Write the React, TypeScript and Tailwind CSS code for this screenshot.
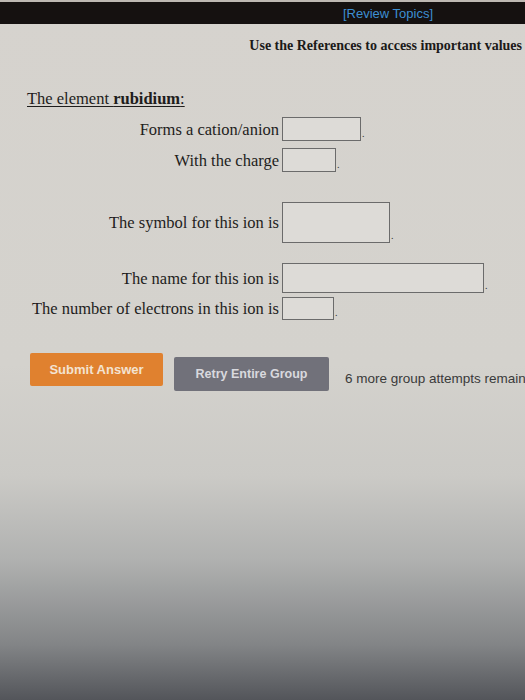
const serif = "font-['Liberation_Serif','Times_New_Roman',serif]"
const sans = "font-['Liberation_Sans',Arial,sans-serif]"

interface Blank {
  label: string
  w: string
  h: string
  mt: string
}

const blanks: Blank[] = [
  { label: 'Forms a cation/anion', w: 'w-[79px]', h: 'h-[24px]', mt: 'mt-[9px]' },
  { label: 'With the charge', w: 'w-[54px]', h: 'h-[24px]', mt: 'mt-[7px]' },
  { label: 'The symbol for this ion is', w: 'w-[108px]', h: 'h-[41px]', mt: 'mt-[30px]' },
  { label: 'The name for this ion is', w: 'w-[202px]', h: 'h-[30px]', mt: 'mt-[20px]' },
  { label: 'The number of electrons in this ion is', w: 'w-[52px]', h: 'h-[23px]', mt: 'mt-[4px]' },
]

function BlankRow({ b }: { b: Blank }) {
  return (
    <div className={`flex items-center ${b.mt}`}>
      <div className="w-[282px] shrink-0 pr-[3px] text-right text-[16.5px] leading-[19px] text-[#1e1d1c]">{b.label}</div>
      <div className={`${b.w} ${b.h} shrink-0 border border-[#6b6b6b] bg-[#dddbd7]`} />
      <span className="ml-[1px] self-end mb-[2px] text-[10px] leading-none text-[#333]">.</span>
    </div>
  )
}

export default function App() {
  return (
    <div className="w-[525px] h-[700px] overflow-hidden whitespace-nowrap bg-[linear-gradient(to_bottom,#d6d3ce_0%,#d4d2cd_52%,#cbcac6_68%,#b0b1b0_80%,#838587_92%,#53555a_100%)]">
      <div className="h-[2px] bg-[#bdb8b2]" />
      <div className="h-[22px] bg-[#151110] flex items-center">
        <span className={`${sans} ml-[343px] text-[13px] leading-none text-[#3d8fd2]`}>[Review Topics]</span>
      </div>
      <div className={`${serif} mt-[13px] pr-[3px] text-right text-[14px] font-bold leading-[18px] text-[#1b1a19]`}>
        Use the References to access important values
      </div>

      <div className={serif}>
        <div className="mt-[34px] ml-[27px] text-[16.5px] leading-[19px] text-[#1e1d1c]">
          <span className="underline underline-offset-2">
            The element <b>rubidium</b>:
          </span>
        </div>
        {blanks.map((b) => (
          <BlankRow key={b.label} b={b} />
        ))}
      </div>

      <div className={`${sans} mt-[33px] flex items-start`}>
        <button className="ml-[30px] w-[133px] h-[33px] shrink-0 rounded-[2px] bg-[#e0812f] text-[13px] font-bold text-[#f3e3d2]">
          Submit Answer
        </button>
        <button className="ml-[11px] mt-[4px] w-[155px] h-[34px] shrink-0 rounded-[2px] bg-[#71717a] text-[12.5px] font-bold text-[#d9d9de]">
          Retry Entire Group
        </button>
        <span className="ml-[16px] mt-[18px] text-[13.5px] leading-[16px] text-[#3a3a3a]">6 more group attempts remaining</span>
      </div>
    </div>
  )
}
